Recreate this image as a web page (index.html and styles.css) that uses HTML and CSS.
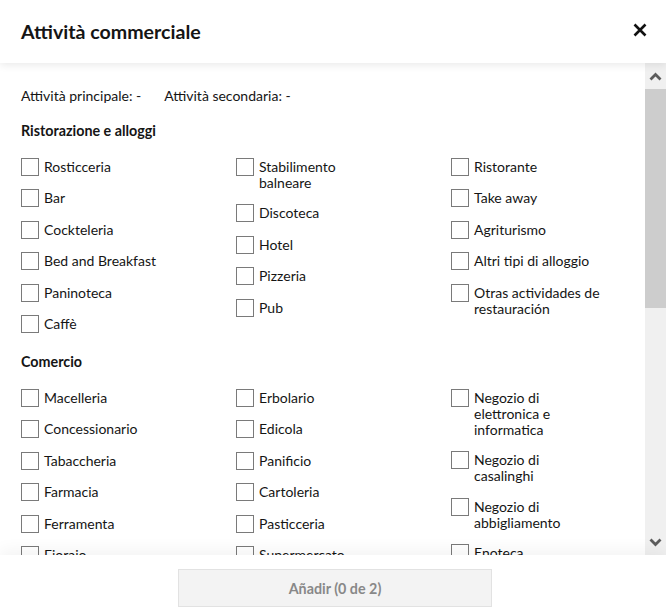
FILE: index.html
```html
<!DOCTYPE html>
<html lang="it">
<head>
<meta charset="utf-8">
<title>Attività commerciale</title>
<link rel="stylesheet" href="styles.css">
</head>
<body>
<div class="modal">
  <header class="header">
    <h1 class="title">Attività commerciale</h1>
    <button class="close" aria-label="Chiudi">
      <svg width="14" height="14" viewBox="0 0 14 14"><path d="M1.5 1.5 L12.5 12.5 M12.5 1.5 L1.5 12.5" stroke="#111" stroke-width="2.6" fill="none"/></svg>
    </button>
  </header>
  <div class="body">
    <div class="content">
      <p class="info"><span>Attività principale: -</span><span>Attività secondaria: -</span></p>

      <section class="section">
        <h2 class="section-title">Ristorazione e alloggi</h2>
        <div class="grid">
          <div class="col">
            <label class="item"><span class="box"></span><span class="text">Rosticceria</span></label>
            <label class="item"><span class="box"></span><span class="text">Bar</span></label>
            <label class="item"><span class="box"></span><span class="text">Cockteleria</span></label>
            <label class="item"><span class="box"></span><span class="text">Bed and Breakfast</span></label>
            <label class="item"><span class="box"></span><span class="text">Paninoteca</span></label>
            <label class="item"><span class="box"></span><span class="text">Caffè</span></label>
          </div>
          <div class="col">
            <label class="item"><span class="box"></span><span class="text">Stabilimento<br>balneare</span></label>
            <label class="item"><span class="box"></span><span class="text">Discoteca</span></label>
            <label class="item"><span class="box"></span><span class="text">Hotel</span></label>
            <label class="item"><span class="box"></span><span class="text">Pizzeria</span></label>
            <label class="item"><span class="box"></span><span class="text">Pub</span></label>
          </div>
          <div class="col">
            <label class="item"><span class="box"></span><span class="text">Ristorante</span></label>
            <label class="item"><span class="box"></span><span class="text">Take away</span></label>
            <label class="item"><span class="box"></span><span class="text">Agriturismo</span></label>
            <label class="item"><span class="box"></span><span class="text">Altri tipi di alloggio</span></label>
            <label class="item"><span class="box"></span><span class="text">Otras actividades de<br>restauración</span></label>
          </div>
        </div>
      </section>

      <section class="section">
        <h2 class="section-title">Comercio</h2>
        <div class="grid">
          <div class="col">
            <label class="item"><span class="box"></span><span class="text">Macelleria</span></label>
            <label class="item"><span class="box"></span><span class="text">Concessionario</span></label>
            <label class="item"><span class="box"></span><span class="text">Tabaccheria</span></label>
            <label class="item"><span class="box"></span><span class="text">Farmacia</span></label>
            <label class="item"><span class="box"></span><span class="text">Ferramenta</span></label>
            <label class="item"><span class="box"></span><span class="text">Fioraio</span></label>
          </div>
          <div class="col">
            <label class="item"><span class="box"></span><span class="text">Erbolario</span></label>
            <label class="item"><span class="box"></span><span class="text">Edicola</span></label>
            <label class="item"><span class="box"></span><span class="text">Panificio</span></label>
            <label class="item"><span class="box"></span><span class="text">Cartoleria</span></label>
            <label class="item"><span class="box"></span><span class="text">Pasticceria</span></label>
            <label class="item"><span class="box"></span><span class="text">Supermercato</span></label>
          </div>
          <div class="col">
            <label class="item"><span class="box"></span><span class="text">Negozio di<br>elettronica e<br>informatica</span></label>
            <label class="item"><span class="box"></span><span class="text">Negozio di<br>casalinghi</span></label>
            <label class="item"><span class="box"></span><span class="text">Negozio di<br>abbigliamento</span></label>
            <label class="item"><span class="box"></span><span class="text">Enoteca</span></label>
          </div>
        </div>
      </section>
    </div>
    <div class="scrollbar">
      <div class="sb-btn">
        <svg width="13" height="9" viewBox="0 0 13 9"><path d="M1.5 7.5 L6.5 2.5 L11.5 7.5" stroke="#5c5c5c" stroke-width="2.8" fill="none"/></svg>
      </div>
      <div class="sb-thumb"></div>
      <div class="sb-track"></div>
      <div class="sb-btn">
        <svg width="13" height="9" viewBox="0 0 13 9"><path d="M1.5 1.5 L6.5 6.5 L11.5 1.5" stroke="#5c5c5c" stroke-width="2.8" fill="none"/></svg>
      </div>
    </div>
  </div>
  <footer class="footer">
    <button class="add" disabled>Añadir (0 de 2)</button>
  </footer>
</div>
</body>
</html>
```

FILE: styles.css
```css
* { box-sizing: border-box; }

html, body {
  margin: 0;
  padding: 0;
  background: #fff;
}

body {
  font-family: Lato, "Open Sans", sans-serif;
  color: #151515;
  font-size: 14px;
}

.modal {
  display: flex;
  flex-direction: column;
  height: 613px;
  width: 666px;
  overflow: hidden;
}

.header {
  position: relative;
  z-index: 2;
  height: 63px;
  flex: 0 0 63px;
  display: flex;
  align-items: center;
  justify-content: space-between;
  padding: 0 19px 0 21px;
  background: #fff;
  box-shadow: 0 2px 8px rgba(0, 0, 0, 0.09);
}

.title {
  margin: 0;
  font-size: 19.6px;
  font-weight: 700;
  color: #151515;
  line-height: 24px;
  padding-top: 1px;
}

.close {
  border: 0;
  background: none;
  padding: 0;
  width: 14px;
  height: 14px;
  display: flex;
  margin-top: -4px;
}

.body {
  flex: 1;
  display: flex;
  min-height: 0;
}

.content {
  flex: 1;
  overflow: hidden;
  padding: 23px 0 0 21px;
}

.info {
  margin: 0 0 15px;
  line-height: 20px;
  display: flex;
  gap: 23px;
}

.section + .section {
  margin-top: 6px;
}

.section-title {
  margin: 0 0 17px;
  font-size: 14.3px;
  font-weight: 700;
  line-height: 20px;
  color: #151515;
}

.grid {
  display: grid;
  grid-template-columns: 155px 155px 155px;
  column-gap: 60px;
}

.col {
  display: flex;
  flex-direction: column;
  gap: 13.4px;
  padding-bottom: 13px;
}

.item {
  display: flex;
  align-items: flex-start;
  gap: 5px;
}

.box {
  flex: 0 0 18px;
  width: 18px;
  height: 18px;
  border: 1px solid #7a7a7a;
  background: #fff;
}

.text {
  padding-top: 1px;
  line-height: 16px;
  color: #151515;
}

.scrollbar {
  width: 21px;
  flex: 0 0 21px;
  display: flex;
  flex-direction: column;
  background: #f0f0f0;
}

.sb-btn {
  height: 26px;
  flex: 0 0 26px;
  display: flex;
  align-items: center;
  justify-content: center;
}

.sb-thumb {
  height: 219px;
  flex: 0 0 219px;
  background: #cdcdcd;
}

.sb-track {
  flex: 1;
}

.footer {
  position: relative;
  z-index: 2;
  flex: 0 0 58px;
  display: flex;
  justify-content: center;
  align-items: flex-start;
  padding: 14px 0 0 4px;
  background: #fff;
  box-shadow: 0 -6px 14px rgba(0, 0, 0, 0.045);
}

.add {
  width: 314px;
  height: 38px;
  background: #f3f3f3;
  border: 1px solid #e2e2e2;
  border-radius: 0;
  font-family: Lato, "Open Sans", sans-serif;
  font-size: 14.3px;
  font-weight: 700;
  color: #888;
}
```
